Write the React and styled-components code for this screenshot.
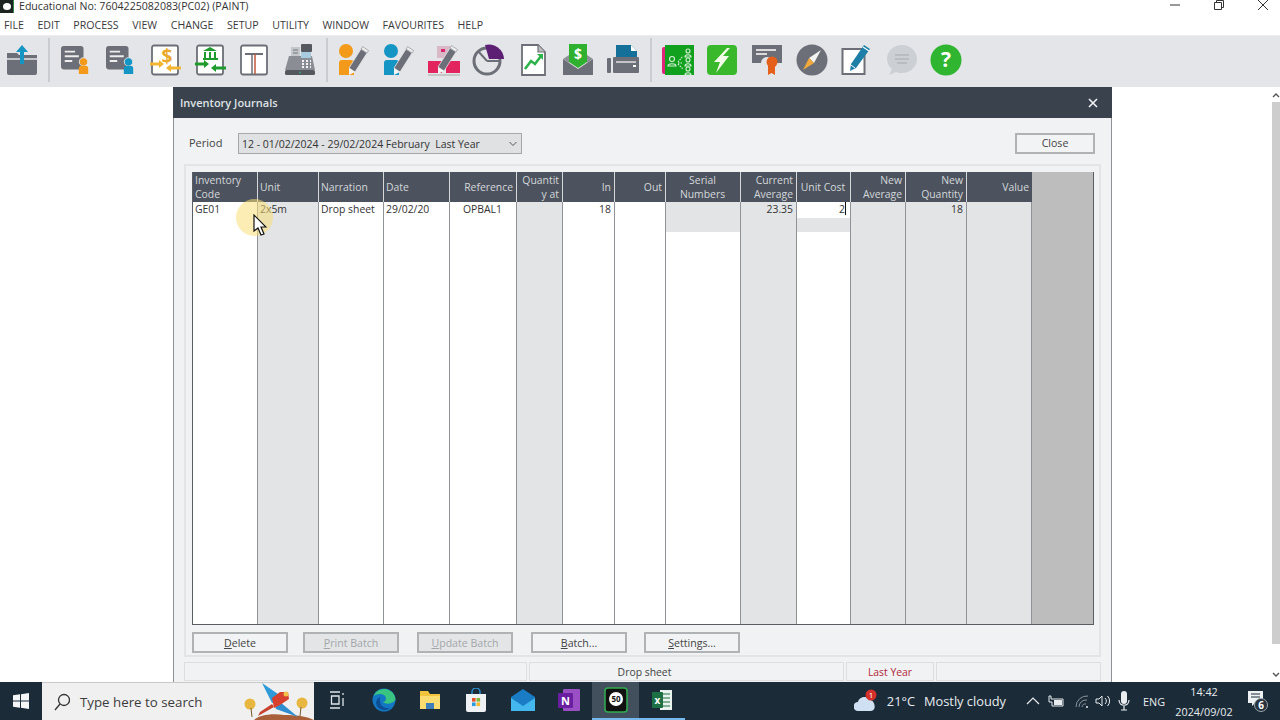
import React from "react";
import styled, { createGlobalStyle } from "styled-components";

const GlobalStyle = createGlobalStyle`
  html, body { margin: 0; padding: 0; background: #fff; }
  body { font-family: "Open Sans", "Noto Sans", sans-serif; color: #333; }
  #root { width: 1280px; height: 720px; overflow: hidden; }
`;

const G = "#6c6f77";
const O = "#f49a1a";
const B = "#1595c4";
const GR = "#1f9a2c";

/* toolbar icons */
const Svg = ({ size = 32, children }) => (
  <svg width={size} height={size} viewBox="0 0 32 32">{children}</svg>
);

const FolderUp = () => (
  <Svg>
    <path d="M1 9h10l2 2h18v18a2 2 0 0 1-2 2H3a2 2 0 0 1-2-2z" fill={G} />
    <path d="M1 15h30" stroke="#e3e5e8" strokeWidth="1.5" />
    <path d="M16 20V6" stroke={B} strokeWidth="4" />
    <path d="M10 8l6-7 6 7z" fill={B} />
  </Svg>
);
const DocPerson = ({ color }) => (
  <Svg size={30}>
    <rect x="0" y="1" width="24" height="25" rx="3" fill={G} />
    <path d="M4 7h11M4 12h15M4 17h8" stroke="#eee" strokeWidth="2" />
    <circle cx="24" cy="18" r="4.5" fill={color} stroke="#e3e5e8" />
    <path d="M19 31v-6a3 3 0 0 1 3-3h4a3 3 0 0 1 3 3v6z" fill={color} />
  </Svg>
);
const FrameIcon = ({ children }) => (
  <Svg>
    <rect x="2" y="1.5" width="26" height="29" rx="2" fill="#fff" stroke={G} strokeWidth="1.8" />
    {children}
  </Svg>
);
const Dollar = () => (
  <FrameIcon>
    <text x="17" y="19" fontSize="19" fontWeight="700" textAnchor="middle" fill="#e9a92b" fontFamily="Open Sans">$</text>
    <path d="M0 20h10" stroke="#f2b632" strokeWidth="3" /><path d="M9 16l5 4-5 4z" fill="#f2b632" />
    <path d="M20 24h11" stroke="#f2b632" strokeWidth="3" /><path d="M21 20l-5 4 5 4z" fill="#f2b632" />
  </FrameIcon>
);
const Bank = () => (
  <FrameIcon>
    <path d="M15 3l7 4H8z" fill={GR} />
    <path d="M10 8v6M15 8v6M20 8v6" stroke={GR} strokeWidth="2" />
    <path d="M8 15h15" stroke={GR} strokeWidth="2" />
    <path d="M0 20h10" stroke={GR} strokeWidth="3" /><path d="M9 16l5 4-5 4z" fill={GR} />
    <path d="M20 24h11" stroke={GR} strokeWidth="3" /><path d="M21 20l-5 4 5 4z" fill={GR} />
  </FrameIcon>
);
const TAccount = () => (
  <FrameIcon>
    <path d="M6 10h18" stroke={G} strokeWidth="2" />
    <path d="M13 10v20" stroke={G} strokeWidth="1.5" />
    <path d="M16 10v20" stroke="#c0573a" strokeWidth="1.5" />
  </FrameIcon>
);
const Till = () => (
  <Svg>
    <rect x="17" y="0" width="11" height="8" rx="1" fill="#55585f" />
    <path d="M7 3h9v10H7z" fill="#c4c7cb" />
    <path d="M9 6h5M9 9h5" stroke="#777" strokeWidth="1.2" />
    <path d="M5 12h23l3 14H1z" fill="#8a8d93" />
    <rect x="17" y="8" width="10" height="6" fill="#a9cbe0" />
    <path d="M18 17h2M22 17h2M26 17h1M18 20h2M22 20h2M26 20h1M18 23h2M22 23h2M26 23h1" stroke="#f4f4f4" strokeWidth="2" />
    <rect x="1" y="26" width="30" height="5" rx="1.5" fill="#55585f" />
    <circle cx="16" cy="28.500" r="1" fill="#3aa27b" />
  </Svg>
);
const Pencil = ({ x = 0, y = 0 }) => (
  <g transform={`translate(${x} ${y})`}>
    <path d="M20 3l6 4-12 19-6-4z" fill={G} stroke="#e3e5e8" strokeWidth="0.8" />
    <path d="M20 3l1.6-2.4 6 4L26 7z" fill="#eee" stroke={G} strokeWidth="0.5" />
    <path d="M8 22l6 4-6 3z" fill="#f3f3f3" />
  </g>
);
const PersonPencil = ({ color }) => (
  <Svg>
    <circle cx="8" cy="7" r="7" fill={color} />
    <path d="M1 31V19a3 3 0 0 1 3-3h9a3 3 0 0 1 3 3v12z" fill={color} />
    <Pencil x="3" y="2" />
  </Svg>
);
const BoxPencil = () => (
  <Svg>
    <rect x="9" y="2" width="13" height="12" fill="#d9b9c6" />
    <rect x="13" y="5" width="4" height="3" fill="#d8266f" />
    <rect x="0" y="17" width="14" height="12" fill="#e2245f" />
    <rect x="18" y="17" width="14" height="12" fill="#e2245f" />
    <path d="M0 31h32" stroke="#bbb" strokeWidth="1.5" />
    <Pencil x="2" y="1" />
  </Svg>
);
const Pie = () => (
  <Svg>
    <circle cx="15" cy="17" r="13" fill="#e3e5e8" stroke={G} strokeWidth="3" />
    <path d="M15 17L6 7" stroke={G} strokeWidth="2" /><path d="M15 17h14" stroke={G} strokeWidth="2" />
    <path d="M13 1a15 15 0 0 1 19 14H17z" fill="#5c1f73" />
  </Svg>
);
const ChartDoc = () => (
  <Svg>
    <path d="M5 1h16l7 7v23H5z" fill="#fff" stroke={G} strokeWidth="1.8" />
    <path d="M21 1v7h7" fill="#bbb" stroke={G} strokeWidth="1.2" />
    <path d="M8 25l6-8 4 3 6-8" fill="none" stroke="#2fb24b" strokeWidth="2.6" />
    <path d="M20 10h6v6z" fill="#2fb24b" />
  </Svg>
);
const MailMoney = () => (
  <Svg>
    <path d="M1 15l15 10 15-10v16H1z" fill={G} />
    <path d="M1 15l6-4v8zM31 15l-6-4v8z" fill="#8d9097" />
    <path d="M7 0h18v18l-9 6-9-6z" fill="#2fb02f" />
    <text x="16" y="15" fontSize="14" fontWeight="700" textAnchor="middle" fill="#fff" fontFamily="Open Sans">$</text>
  </Svg>
);
const Printer = () => (
  <Svg>
    <path d="M9 1h15l6 6v8H9z" fill="#146f99" />
    <path d="M24 1v6h6z" fill="#fff" />
    <rect x="0" y="14" width="4" height="15" rx="1" fill={G} />
    <rect x="6" y="13" width="26" height="16" rx="1" fill={G} />
    <path d="M9 18h20" stroke="#fff" strokeWidth="1.2" />
    <rect x="26" y="21" width="3" height="2" fill="#fff" />
  </Svg>
);
const OrgBook = () => (
  <Svg>
    <rect x="0" y="3" width="8" height="27" rx="2" fill="#e0257a" />
    <rect x="3" y="1" width="29" height="30" fill="#12a01f" />
    <g fill="none" stroke="#d6f0d6" strokeWidth="1.1">
      <circle cx="10" cy="15" r="2.5" /><path d="M6 22c0-3 8-3 8 0z" />
      <circle cx="26" cy="7" r="2" /><path d="M23 13c0-3 6-3 6 0z" />
      <circle cx="26" cy="16" r="2" /><path d="M23 22c0-3 6-3 6 0z" />
      <circle cx="26" cy="25" r="2" /><path d="M23 31c0-3 6-3 6 0z" />
      <path d="M16 18l5-6M16 19h5M16 20l5 5" strokeDasharray="1.5 1" />
    </g>
  </Svg>
);
const Bolt = () => (
  <Svg>
    <rect x="1" y="1" width="30" height="30" rx="4" fill="#39b82c" />
    <path d="M21 4L8 18h6l-4 11 13-17h-6l7-8z" fill="#f4fbe8" />
  </Svg>
);
const Certificate = () => (
  <Svg>
    <path d="M1 1h30v18h-9a6 6 0 0 0-12 0H1z" fill={G} />
    <path d="M5 6h20M5 10h11" stroke="#fff" strokeWidth="1.5" />
    <path d="M17 22h7v9l-3.5-2-3.5 2z" fill="#e5601a" />
    <circle cx="21" cy="18" r="5.5" fill="#e5601a" />
  </Svg>
);
const Compass = () => (
  <Svg>
    <circle cx="16" cy="16" r="15.5" fill={G} />
    <path d="M25 6L18 19l-5-5z" fill="#f3f3f3" />
    <path d="M7 26l6-12 5 5z" fill="#f2a93b" />
  </Svg>
);
const NotePen = () => (
  <Svg>
    <rect x="1.5" y="5" width="22" height="25" fill="#fff" stroke={G} strokeWidth="2" />
    <path d="M23 1l6 4-14 19-6 3 1-7z" fill="#1d7fa8" />
    <path d="M22 3l6 4" stroke="#fff" strokeWidth="1.2" />
    <path d="M10 21l4 3" stroke="#fff" strokeWidth="1" />
  </Svg>
);
const Chat = () => (
  <Svg>
    <path d="M16 1c8 0 15 6 15 14s-7 14-15 14c-2 0-4 0-6-1l-7 3 3-6C3 23 1 19 1 15 1 7 8 1 16 1z" fill="#ccd0d4" />
    <path d="M9 11h14M9 15h14M11 19h10" stroke="#b3b7bc" strokeWidth="1.5" />
  </Svg>
);
const Help = () => (
  <Svg>
    <circle cx="16" cy="16" r="15.5" fill="#2fb52f" />
    <text x="16" y="23" fontSize="21" fontWeight="700" textAnchor="middle" fill="#fff" fontFamily="Open Sans">?</text>
  </Svg>
);

/* page frame */
const Page = styled.div`
  width: 1280px;
  height: 720px;
  display: flex;
  flex-direction: column;
  position: relative;
  overflow: hidden;
`;
const TitleBar = styled.div`
  height: 14px;
  flex: none;
  box-sizing: border-box;
  padding-bottom: 2px;
  display: flex;
  align-items: center;
  font-size: 10.6px;
  line-height: 12px;
  color: #333;
  overflow: hidden;
`;
const AppLogo = styled.span`
  width: 14px;
  height: 14px;
  flex: none;
  box-sizing: border-box;
  background: #1c2420;
  border-right: 1px solid #2f8a4a;
  display: inline-flex;
  align-items: center;
  justify-content: center;
  margin: 0 5px 0 0;
  &::after {
    content: "";
    width: 8px;
    height: 7px;
    border-radius: 50%;
    background: #fff;
  }
`;
const WindowButtons = styled.div`
  margin: -2px 0 0 auto;
  display: flex;
  align-items: center;
  gap: 32px;
  padding-right: 11px;
`;
const MenuBar = styled.div`
  height: 21px;
  flex: none;
  display: flex;
  align-items: center;
  padding-left: 4px;
  gap: 13.55px;
  font-size: 10.6px;
  color: #3a3a3a;
`;
const Toolbar = styled.div`
  height: 52px;
  flex: none;
  background: #e3e5e8;
  border-top: 1px solid #eceef0;
  box-sizing: border-box;
  padding-bottom: 3px;
  display: flex;
  align-items: center;
`;
const ToolSlot = styled.div`
  width: 44.8px;
  flex: none;
  display: flex;
  justify-content: center;
  align-items: center;
`;
const ToolSep = styled.div`
  width: 2px;
  height: 44px;
  flex: none;
  background: #c9ccd0;
  margin: 0 ${(p) => p.$after}px 0 ${(p) => p.$before}px;
`;
const Middle = styled.div`
  flex: 1;
  min-height: 0;
  display: flex;
`;

/* dialog */
const Dialog = styled.div`
  width: 939px;
  margin-left: 173px;
  flex: none;
  display: flex;
  flex-direction: column;
  background: #f0f2f3;
  border-left: 1px solid #8d9094;
  border-right: 1px solid #8d9094;
  box-sizing: border-box;
`;
const DialogHead = styled.div`
  height: 31px;
  flex: none;
  margin: 0 -1px;
  background: #3a424d;
  color: #dfe2e5;
  font-size: 11px;
  font-weight: 600;
  display: flex;
  align-items: center;
  justify-content: space-between;
  padding: 0 14px 0 7px;
`;
const PeriodRow = styled.div`
  height: 46px;
  flex: none;
  display: flex;
  align-items: center;
  padding: 4px 16px 0 15px;
  box-sizing: border-box;
`;
const PeriodLabel = styled.span`
  width: 49px;
  font-size: 11px;
  color: #444;
  margin-top: -1px;
`;
const PeriodSelect = styled.div`
  width: 284px;
  height: 21px;
  margin-top: 1px;
  box-sizing: border-box;
  background: #dfe1e3;
  border: 1px solid #a6a8aa;
  display: flex;
  align-items: center;
  justify-content: space-between;
  padding: 0 3px;
  font-size: 10.5px;
  color: #333;
`;
const Btn = styled.div`
  width: ${(p) => p.$w || 96}px;
  height: 21px;
  box-sizing: border-box;
  border: 2px solid #b0b3b6;
  background: ${(p) => (p.$off ? "#e3e5e7" : "#f2f3f4")};
  color: ${(p) => (p.$off ? "#a4a7aa" : "#444")};
  font-size: 10.6px;
  display: flex;
  align-items: center;
  justify-content: center;
`;
const CloseBtn = styled(Btn)`
  margin-left: auto;
`;
const GroupBox = styled.div`
  height: 493px;
  flex: none;
  margin: 0 10px;
  border: 2px solid #e2e4e6;
  box-sizing: border-box;
  padding: 6px 5px 0 6px;
  display: flex;
  flex-direction: column;
`;
const Table = styled.div`
  height: 453px;
  flex: none;
  display: flex;
  border: 1px solid #5a5d62;
  border-top: 0;
  box-sizing: border-box;
`;
const Col = styled.div`
  width: ${(p) => p.$w}px;
  flex: none;
  display: flex;
  flex-direction: column;
  box-sizing: border-box;
`;
const Head = styled.div`
  height: 30px;
  flex: none;
  background: #4c535e;
  color: #d4d7db;
  font-size: 10.4px;
  line-height: 14px;
  box-sizing: border-box;
  padding: 0 3px 0 2px;
  display: flex;
  align-items: center;
  justify-content: ${(p) => ({ left: "flex-start", right: "flex-end", center: "center" }[p.$align])};
  text-align: ${(p) => p.$align};
  border-right: ${(p) => (p.$last ? 0 : "1px solid #d6d8da")};
  white-space: nowrap;
`;
const Body = styled.div`
  flex: 1;
  background: ${(p) => (p.$shade ? "#e2e4e6" : "#fff")};
  border-right: ${(p) => (p.$last ? 0 : "1px solid #8f9296")};
  display: flex;
  flex-direction: column;
  box-sizing: border-box;
`;
const Filler = styled.div`
  flex: 1;
  background: #bdbdbd;
`;
const Cell = styled.div`
  height: ${(p) => p.$h || 16}px;
  flex: none;
  box-sizing: border-box;
  padding: 0 ${(p) => (p.$editing ? 4 : 3)}px 0 ${(p) => (p.$indent ? 13 : 2)}px;
  font-size: 10.4px;
  line-height: 15px;
  color: #333;
  text-align: ${(p) => p.$align};
  background: ${(p) => (p.$fill ? "#e2e4e6" : "transparent")};
  white-space: nowrap;
  overflow: hidden;
`;
const Caret = styled.span`
  display: inline-block;
  width: 1px;
  height: 13px;
  background: #111;
  vertical-align: -2px;
`;
const ButtonRow = styled.div`
  display: flex;
  padding-top: 7px;
`;
const ButtonSpace = styled.div`
  width: ${(p) => p.$w}px;
  flex: none;
`;
const StatusBar = styled.div`
  margin: 5px 10px 0;
  height: 19px;
  flex: none;
  display: flex;
  gap: 2px;
`;
const StatusCell = styled.div`
  width: ${(p) => p.$w}px;
  flex: none;
  box-sizing: border-box;
  border: 1px solid #dcdee0;
  padding-right: ${(p) => p.$shift || 0}px;
  font-size: 10.4px;
  color: ${(p) => (p.$red ? "#b0283a" : "#444")};
  display: flex;
  align-items: center;
  justify-content: center;
`;

/* page scrollbar */
const PageScroll = styled.div`
  margin-left: auto;
  width: 8px;
  flex: none;
  display: flex;
  flex-direction: column;
  align-items: center;
`;
const ScrollArrow = styled.div`
  height: 15px;
  flex: none;
  display: flex;
  align-items: center;
  justify-content: center;
`;
const ScrollThumb = styled.div`
  width: 8px;
  height: 542px;
  flex: none;
  background: #cdcdcd;
`;
const ScrollTrack = styled.div`
  flex: 1;
`;

/* taskbar */
const Taskbar = styled.div`
  height: 38px;
  flex: none;
  background: #1b2b38;
  display: flex;
  align-items: center;
  color: #e8ecef;
`;
const Start = styled.div`
  width: 42px;
  height: 38px;
  flex: none;
  display: flex;
  align-items: center;
  justify-content: center;
`;
const SearchBox = styled.div`
  width: 272px;
  height: 38px;
  flex: none;
  box-sizing: border-box;
  background: #f0f0f0;
  border-top: 1px solid #c9c9c9;
  display: flex;
  align-items: center;
  padding-left: 12px;
  gap: 10px;
  font-size: 13.3px;
  color: #3c3c3c;
  position: relative;
  overflow: hidden;
`;
const SearchArt = styled.svg`
  position: absolute;
  right: 0;
  bottom: 0;
`;
const TaskApp = styled.div`
  width: 46.4px;
  height: 38px;
  flex: none;
  display: flex;
  align-items: center;
  justify-content: center;
  box-sizing: border-box;
  background: ${(p) => (p.$active ? "#41505c" : "transparent")};
  border-bottom: 2px solid ${(p) => (p.$open ? "#76b9ed" : "transparent")};
`;
const Tray = styled.div`
  margin-left: auto;
  display: flex;
  align-items: center;
  height: 38px;
`;
const Weather = styled.div`
  display: flex;
  align-items: center;
  font-size: 12.8px;
  gap: 9px;
  margin-right: 20px;
  white-space: nowrap;
`;
const TrayIcon = styled.div`
  width: ${(p) => p.$w}px;
  display: flex;
  justify-content: center;
  align-items: center;
`;
const Lang = styled.div`
  font-size: 10.8px;
  width: 40px;
  text-align: center;
`;
const Clock = styled.div`
  width: 60px;
  font-size: 10.8px;
  line-height: 20px;
  text-align: center;
  padding-top: 1px;
  white-space: nowrap;
`;
const Notify = styled.div`
  width: 46px;
  display: flex;
  justify-content: center;
  align-items: center;
`;

/* pointer overlay */
const Halo = styled.div`
  position: absolute;
  left: 236px;
  top: 199px;
  width: 37px;
  height: 37px;
  border-radius: 50%;
  background: rgba(250, 222, 120, 0.55);
`;
const Pointer = styled.svg`
  position: absolute;
  left: 253px;
  top: 214px;
`;

const tools1 = [<DocPerson color={O} />, <DocPerson color={B} />, <Dollar />, <Bank />, <TAccount />, <Till />];
const tools2 = [<PersonPencil color={O} />, <PersonPencil color={B} />, <BoxPencil />, <Pie />, <ChartDoc />, <MailMoney />, <Printer />];
const tools3 = [<OrgBook />, <Bolt />, <Certificate />, <Compass />, <NotePen />, <Chat />, <Help />];

const menus = ["FILE", "EDIT", "PROCESS", "VIEW", "CHANGE", "SETUP", "UTILITY", "WINDOW", "FAVOURITES", "HELP"];

const columns = [
  { w: 65, head: ["Inventory", "Code"], align: "left", value: "GE01" },
  { w: 61, head: ["Unit"], align: "left", value: "2x5m", shade: true },
  { w: 65, head: ["Narration"], align: "left", value: "Drop sheet" },
  { w: 66, head: ["Date"], align: "left", value: "29/02/20" },
  { w: 67, head: ["Reference"], align: "right", value: "OPBAL1", valueAlign: "left", indent: true },
  { w: 46, head: ["Quantit", "y at"], align: "right", shade: true },
  { w: 52, head: ["In"], align: "right", value: "18" },
  { w: 51, head: ["Out"], align: "right" },
  { w: 75, head: ["Serial", "Numbers"], align: "center", block: 30 },
  { w: 56, head: ["Current", "Average"], align: "right", value: "23.35", shade: true },
  { w: 54, head: ["Unit Cost"], align: "center", editing: true },
  { w: 55, head: ["New", "Average"], align: "right", shade: true },
  { w: 61, head: ["New", "Quantity"], align: "right", value: "18", shade: true },
  { w: 65, head: ["Value"], align: "right", shade: true, last: true },
];

const ColumnBody = ({ c }) => {
  if (c.block) return <Body><Cell $h={c.block} $fill /></Body>;
  if (c.editing) {
    return (
      <Body>
        <Cell $align="right" $editing>2<Caret /></Cell>
        <Cell $h={14} $fill />
      </Body>
    );
  }
  return (
    <Body $shade={c.shade}>
      <Cell $align={c.valueAlign || c.align} $indent={c.indent}>{c.value}</Cell>
    </Body>
  );
};

const Mini = ({ w = 24, h = 24, children }) => (
  <svg width={w} height={h} viewBox={`0 0 ${w} ${h}`}>{children}</svg>
);

export default function App() {
  return (
    <Page>
      <GlobalStyle />
      <TitleBar>
        <AppLogo />
        Educational No: 7604225082083(PC02) (PAINT)
        <WindowButtons>
          <Mini w={12} h={12}><path d="M1 6h10" stroke="#333" /></Mini>
          <Mini w={12} h={12}><path d="M1.500 3.500h7v7h-7zM3.500 3V1.500h7v7H9" fill="none" stroke="#333" /></Mini>
          <Mini w={12} h={12}><path d="M1 1l10 10M11 1L1 11" stroke="#333" /></Mini>
        </WindowButtons>
      </TitleBar>
      <MenuBar>
        {menus.map((m) => <span key={m}>{m}</span>)}
      </MenuBar>
      <Toolbar>
        <ToolSlot><FolderUp /></ToolSlot>
        <ToolSep $before={3.5} $after={3.5} />
        {tools1.map((t, i) => <ToolSlot key={i}>{t}</ToolSlot>)}
        <ToolSep $before={3.5} $after={3.5} />
        {tools2.map((t, i) => <ToolSlot key={i}>{t}</ToolSlot>)}
        <ToolSep $before={5} $after={3} />
        {tools3.map((t, i) => <ToolSlot key={i}>{t}</ToolSlot>)}
      </Toolbar>
      <Middle>
        <Dialog>
          <DialogHead>
            Inventory Journals
            <Mini w={10} h={10}><path d="M1 1l8 8M9 1L1 9" stroke="#f2f3f4" strokeWidth="1.6" /></Mini>
          </DialogHead>
          <PeriodRow>
            <PeriodLabel>Period</PeriodLabel>
            <PeriodSelect>
              12 - 01/02/2024 - 29/02/2024 February&nbsp; Last Year
              <Mini w={10} h={8}><path d="M1.500 2l3.500 3.500L8.500 2" fill="none" stroke="#555" /></Mini>
            </PeriodSelect>
            <CloseBtn $w={80}>Close</CloseBtn>
          </PeriodRow>
          <GroupBox>
            <Table>
              {columns.map((c) => (
                <Col key={c.head.join()} $w={c.w}>
                  <Head $align={c.align} $last={c.last}>
                    <span>{c.head.map((l, i) => <React.Fragment key={l}>{i > 0 && <br />}{l}</React.Fragment>)}</span>
                  </Head>
                  <ColumnBody c={c} />
                </Col>
              ))}
              <Col $w={61}><Filler /></Col>
            </Table>
            <ButtonRow>
              <Btn><u>D</u>elete</Btn>
              <ButtonSpace $w={15} />
              <Btn $off><u>P</u>rint Batch</Btn>
              <ButtonSpace $w={18} />
              <Btn $off><u>U</u>pdate Batch</Btn>
              <ButtonSpace $w={18} />
              <Btn><u>B</u>atch...</Btn>
              <ButtonSpace $w={17} />
              <Btn><u>S</u>ettings...</Btn>
            </ButtonRow>
          </GroupBox>
          <StatusBar>
            <StatusCell $w={343} />
            <StatusCell $w={315} $shift={84}>Drop sheet</StatusCell>
            <StatusCell $w={88} $red>Last Year</StatusCell>
            <StatusCell $w={165} />
          </StatusBar>
        </Dialog>
        <PageScroll>
          <ScrollArrow><Mini w={8} h={6}><path d="M1 5l3-3 3 3" fill="none" stroke="#555" strokeWidth="1.4" /></Mini></ScrollArrow>
          <ScrollThumb />
          <ScrollTrack />
          <ScrollArrow><Mini w={8} h={6}><path d="M1 1l3 3 3-3" fill="none" stroke="#555" strokeWidth="1.4" /></Mini></ScrollArrow>
        </PageScroll>
      </Middle>
      <Taskbar>
        <Start>
          <Mini w={16} h={16}><path d="M0 2.300l7-1v6.200H0zM8 1.200l8-1.200v7.500H8zM0 8.500h7v6.200l-7-1zM8 8.500h8V16l-8-1.200z" fill="#f4f6f8" /></Mini>
        </Start>
        <SearchBox>
          <Mini w={16} h={18}><circle cx="10" cy="7" r="5.500" fill="none" stroke="#333" strokeWidth="1.3" /><path d="M6 11l-5 6" stroke="#333" strokeWidth="1.3" /></Mini>
          Type here to search
          <SearchArt width="76" height="38" viewBox="0 0 76 38">
            <path d="M16 38c5-5 18-7 30-5 12 0 22 1 30 5z" fill="#a9603a" />
            <circle cx="12" cy="22" r="5.500" fill="#e8b73f" /><path d="M13 26l1 9" stroke="#7a5a2a" />
            <circle cx="64" cy="21" r="5.500" fill="#e8b73f" /><path d="M63 25l-1 9" stroke="#7a5a2a" />
            <path d="M24 1l16 11 3 7-9 2z" fill="#2f9ad8" />
            <path d="M42 20l18 15-22-8-2-6z" fill="#2f8ed0" />
            <path d="M34 16l8-6 8 0 1 7-9 6-6 3z" fill="#d8402e" />
            <path d="M36 25l-16 9 2-4 12-8z" fill="#c8402e" />
            <circle cx="48" cy="12" r="2.500" fill="#f1c04a" />
          </SearchArt>
        </SearchBox>
        <TaskApp>
          <Mini w={16} h={18}><path d="M1 1h10M1 17h10M2.500 5h7.500v8H2.500z" fill="none" stroke="#dfe5ea" strokeWidth="1.300" /><path d="M14 2v2M14 7v8" stroke="#dfe5ea" strokeWidth="1.300" /></Mini>
        </TaskApp>
        <TaskApp>
          <Mini w={24} h={24}>
            <circle cx="12" cy="12" r="11.500" fill="#1477c4" />
            <path d="M23.500 12c0-6-5-11-11-11C7 1 3 4 2 8c3-3 12-3 12 3 0 2-2 3-3 3 2 2 8 3 12.500-2z" fill="#39c481" />
            <path d="M8 13c0 5 5 8 10 7-4 4-13 2-14-5 0-3 2-5 4-6z" fill="#0c4f96" />
          </Mini>
        </TaskApp>
        <TaskApp>
          <Mini w={22} h={20}>
            <path d="M1 1h8l2 3h10v15H1z" fill="#f2c43d" />
            <path d="M1 6h20v13H1z" fill="#fbdc71" />
            <rect x="7" y="13" width="8" height="6" fill="#3d7fb8" />
          </Mini>
        </TaskApp>
        <TaskApp>
          <Mini w={22} h={24}>
            <path d="M7 7V4a4 4 0 0 1 8 0v3" fill="none" stroke="#2b8ccc" strokeWidth="1.500" />
            <path d="M1 6h20v16a2 2 0 0 1-2 2H3a2 2 0 0 1-2-2z" fill="#eef2f5" />
            <rect x="7" y="10" width="3.600" height="3.600" fill="#e6502a" /><rect x="11.500" y="10" width="3.600" height="3.600" fill="#7fba3a" />
            <rect x="7" y="14.500" width="3.600" height="3.600" fill="#2b9be0" /><rect x="11.500" y="14.500" width="3.600" height="3.600" fill="#f4b92c" />
          </Mini>
        </TaskApp>
        <TaskApp>
          <Mini w={24} h={22}>
            <path d="M12 0l12 8v14H0V8z" fill="#1a7cc4" />
            <path d="M0 9l12 8 12-8v13H0z" fill="#44b8ee" />
          </Mini>
        </TaskApp>
        <TaskApp>
          <Mini w={24} h={24}>
            <rect x="6" y="1" width="17" height="22" rx="1" fill="#9b4fc4" />
            <rect x="1" y="5" width="15" height="15" rx="1" fill="#6a1fa0" />
            <text x="8.500" y="17" fontSize="11" fontWeight="700" textAnchor="middle" fill="#fff" fontFamily="Open Sans">N</text>
          </Mini>
        </TaskApp>
        <TaskApp $active $open>
          <Mini w={24} h={26}>
            <rect x="1" y="1" width="22" height="24" rx="3" fill="#111" stroke="#2fae4f" strokeWidth="1.500" />
            <circle cx="12" cy="12" r="7" fill="#fff" />
            <text x="12" y="15" fontSize="8" fontWeight="700" textAnchor="middle" fill="#111" fontFamily="Open Sans">50</text>
          </Mini>
        </TaskApp>
        <TaskApp $open>
          <Mini w={22} h={22}>
            <rect x="9" y="1" width="12" height="20" fill="#e9f2ec" />
            <path d="M12 5h7M12 9h7M12 13h7M12 17h7" stroke="#1d7044" />
            <rect x="1" y="3" width="11" height="16" rx="1" fill="#1d7044" />
            <text x="6.500" y="15" fontSize="10" fontWeight="700" textAnchor="middle" fill="#fff" fontFamily="Open Sans">x</text>
          </Mini>
        </TaskApp>
        <Tray>
          <Weather>
            <Mini w={24} h={24}>
              <path d="M4 22a4 4 0 0 1 0-9c1-5 9-7 12-2 5 0 7 11 1 11z" fill="#cfe0f2" />
              <circle cx="17" cy="6" r="5.500" fill="#d3302c" />
              <text x="17" y="9" fontSize="8" textAnchor="middle" fill="#fff" fontFamily="Open Sans">1</text>
            </Mini>
            <span>21°C</span>
            <span>Mostly cloudy</span>
          </Weather>
          <TrayIcon $w={14}><Mini w={14} h={10}><path d="M1 8l6-6 6 6" fill="none" stroke="#e8ecef" strokeWidth="1.200" /></Mini></TrayIcon>
          <TrayIcon $w={32}><Mini w={16} h={12}><path d="M1 1h2v3h12v7H4V7H1z" fill="none" stroke="#e8ecef" /><rect x="6" y="5" width="8" height="5" fill="#e8ecef" /></Mini></TrayIcon>
          <TrayIcon $w={20}><Mini w={16} h={14}><path d="M2 13a11 11 0 0 1 12-11M5 13a7 7 0 0 1 8-7M8 13a3.500 3.500 0 0 1 4-3" fill="none" stroke="#8b959d" /><circle cx="13" cy="13" r="1" fill="#e8ecef" /></Mini></TrayIcon>
          <TrayIcon $w={22}><Mini w={16} h={14}><path d="M1 5h3l3-3v10L4 9H1z" fill="none" stroke="#e8ecef" /><path d="M10 4a4 4 0 0 1 0 6M12.500 2a7 7 0 0 1 0 10" fill="none" stroke="#e8ecef" /></Mini></TrayIcon>
          <TrayIcon $w={20}><Mini w={12} h={20}><rect x="3" y="0" width="6" height="13" rx="3" fill="#e8ecef" /><path d="M1 9c0 7 10 7 10 0M6 15v4M3 19h6" fill="none" stroke="#e8ecef" strokeWidth="1.200" /></Mini></TrayIcon>
          <Lang>ENG</Lang>
          <Clock>14:42<br />2024/09/02</Clock>
          <Notify>
            <Mini w={22} h={24}>
              <path d="M2 2h15v12H9l-3 3v-3H2z" fill="#eef1f3" />
              <path d="M5 5h9M5 8h9" stroke="#1b2b38" />
              <circle cx="15" cy="16" r="6.500" fill="#26333e" stroke="#9aa4ab" />
              <text x="15" y="19.500" fontSize="10" fontWeight="700" textAnchor="middle" fill="#fff" fontFamily="Open Sans">6</text>
            </Mini>
          </Notify>
        </Tray>
      </Taskbar>
      <Halo />
      <Pointer width="14" height="22" viewBox="0 0 14 22">
        <path d="M1 1v16l4-3 3 7 3-1-3-7h5z" fill="#fff" stroke="#111" strokeWidth="1.200" />
      </Pointer>
    </Page>
  );
}
